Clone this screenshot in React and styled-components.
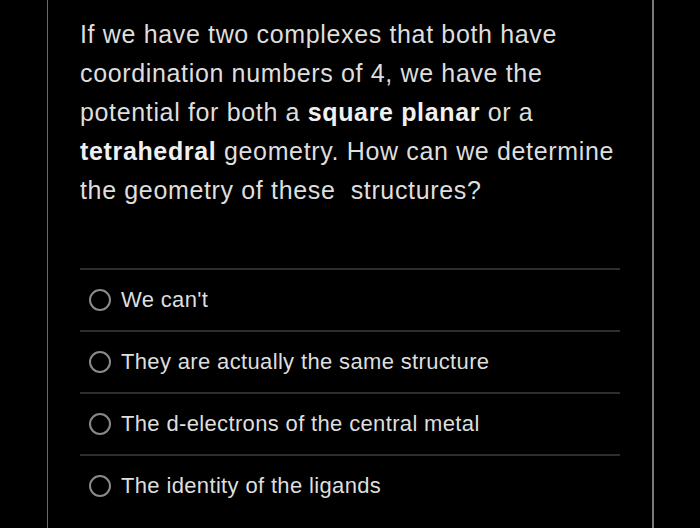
import styled, { createGlobalStyle } from "styled-components";
import * as React from "react";

const Global = createGlobalStyle`
  html, body {
    margin: 0;
    padding: 0;
    background: #000;
  }
  body {
    font-family: "Liberation Sans", Arial, sans-serif;
  }
`;

const options = [
  "We can't",
  "They are actually the same structure",
  "The d-electrons of the central metal",
  "The identity of the ligands",
];

export default function App() {
  const [picked, setPicked] = React.useState(null);
  return (
    <>
      <Global />
      <Page>
        <Card>
          <Question>
            If we have two complexes that both have coordination numbers of 4,
            we have the potential for both a <b>square planar</b> or a{" "}
            <b>tetrahedral</b> geometry. How can we determine the geometry of
            these&nbsp; structures?
          </Question>
          <Options>
            {options.map((o, i) => (
              <Option key={o} onClick={() => setPicked(i)}>
                <Radio $on={picked === i} />
                <Label>{o}</Label>
              </Option>
            ))}
          </Options>
        </Card>
      </Page>
    </>
  );
}

const Page = styled.div`
  width: 700px;
  height: 528px;
  background: #000;
  display: flex;
  justify-content: flex-start;
  padding-left: 47px;
  box-sizing: border-box;
  overflow: hidden;
`;

const Card = styled.div`
  width: 607px;
  height: 100%;
  box-sizing: border-box;
  border-left: 1px solid #6a6a6a;
  border-right: 2px solid #7a7a7a;
  padding: 15px 32px 0 32px;
  display: flex;
  flex-direction: column;
`;

const Question = styled.p`
  margin: 0;
  width: 545px;
  color: #dedede;
  font-size: 25px;
  letter-spacing: 0.65px;
  line-height: 39px;
  b {
    font-weight: bold;
    color: #f0f0f0;
  }
`;

const Options = styled.div`
  margin-top: 58px;
  width: 540px;
  display: flex;
  flex-direction: column;
`;

const Option = styled.label`
  height: 62px;
  border-top: 2px solid #2e2e2e;
  box-sizing: border-box;
  display: flex;
  align-items: center;
  gap: 10px;
  padding-left: 9px;
  cursor: pointer;
`;

const Radio = styled.span`
  width: 18px;
  height: 18px;
  border-radius: 50%;
  border: 2px solid #8a8a8a;
  background: ${(p) => (p.$on ? "#8a8a8a" : "transparent")};
  flex-shrink: 0;
`;

const Label = styled.span`
  color: #dedede;
  font-size: 22px;
  letter-spacing: 0.35px;
`;
